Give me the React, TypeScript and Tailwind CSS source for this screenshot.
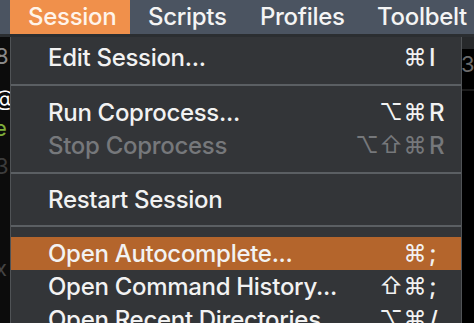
import React from "react";

type Item = { label: string; mods?: string[]; key?: string; disabled?: boolean; active?: boolean };

const groups: Item[][] = [
  [{ label: "Edit Session...", mods: ["⌘"], key: "I" }],
  [
    { label: "Run Coprocess...", mods: ["⌥", "⌘"], key: "R" },
    { label: "Stop Coprocess", mods: ["⌥", "⇧", "⌘"], key: "R", disabled: true },
  ],
  [{ label: "Restart Session" }],
  [
    { label: "Open Autocomplete...", mods: ["⌘"], key: ";", active: true },
    { label: "Open Command History...", mods: ["⇧", "⌘"], key: ";" },
    { label: "Open Recent Directories...", mods: ["⌥", "⌘"], key: "/" },
  ],
];

// separator spacing above / below the line, one per gap between groups
const seps = ["pt-[10px] pb-[10px]", "pt-[10px] pb-[9px]", "pt-[9px] pb-[10px]"];

function Row({ item }: { item: Item }) {
  const color = item.disabled ? "text-[#76787b]" : "text-[#f2f2f2]";
  return (
    <div
      className={`flex h-[33px] shrink-0 items-center pl-[37px] ${color} ${item.active ? "bg-[#b4652c]" : ""}`}
    >
      <span className="flex-1 whitespace-nowrap tracking-[-0.3px]">{item.label}</span>
      {item.key && (
        <span className="flex items-center">
          {item.mods?.map((m, i) => (
            <span key={i} className="w-[24px] text-center text-[23px] font-normal">
              {m}
            </span>
          ))}
          <span className="w-[34px] pl-[2px]">{item.key}</span>
        </span>
      )}
    </div>
  );
}

export default function App() {
  return (
    <div
      className="w-[474px] h-[323px] overflow-hidden bg-black flex flex-col text-[24px] leading-none font-medium"
      style={{ fontFamily: "Inter, 'DejaVu Sans', sans-serif" }}
    >
      <div className="flex h-[34px] shrink-0 bg-[#4b5461] text-[#f4f4f4] pl-[10px] whitespace-nowrap tracking-[-0.3px]">
        <div className="flex w-[120px] items-center pl-[18px] bg-[#f0904b] text-[#fff4ea]">Session</div>
        <div className="flex w-[114px] items-center pl-[18px]">Scripts</div>
        <div className="flex w-[117px] items-center pl-[16px]">Profiles</div>
        <div className="flex items-center pl-[16px]">Toolbelt</div>
      </div>
      <div className="h-[3px] shrink-0 bg-[#2b2e31]" />
      <div className="flex flex-1 min-h-0">
        <div className="w-[10px] shrink-0 overflow-hidden bg-[#0c0c0c] text-[22px] font-normal flex flex-col pt-[8px]">
          <span className="h-[30px] -ml-[5px] text-[#8a8a8a]">8</span>
          <span className="h-[12px]" />
          <span className="h-[30px] -ml-[6px] text-white">@</span>
          <span className="h-[30px] -ml-[6px] text-[#7fae3a]">e</span>
          <span className="h-[110px] -ml-[5px] text-[#3c3c3c] pt-[8px]">3</span>
          <span className="-ml-[5px] text-[#444]">x</span>
        </div>
        <div className="w-[452px] shrink-0 bg-[#333538] border-x border-[#505356] flex flex-col pt-[4px]">
          {groups.map((g, gi) => (
            <React.Fragment key={gi}>
              {gi > 0 && (
                <div className={`shrink-0 ${seps[gi - 1]}`}>
                  <div className="h-[2px] bg-[#5b5f63]" />
                </div>
              )}
              {g.map((it) => (
                <Row key={it.label} item={it} />
              ))}
            </React.Fragment>
          ))}
        </div>
        <div className="flex-1 overflow-hidden bg-black text-[22px] font-normal flex flex-col">
          <div className="h-[12px] bg-[#27292b]" />
          <span className="h-[30px] pt-[4px] -ml-[1px] text-[#6a6a6a]">3</span>
          <div className="h-[2px] mt-[10px] bg-[#1b1b1b]" />
        </div>
      </div>
    </div>
  );
}
